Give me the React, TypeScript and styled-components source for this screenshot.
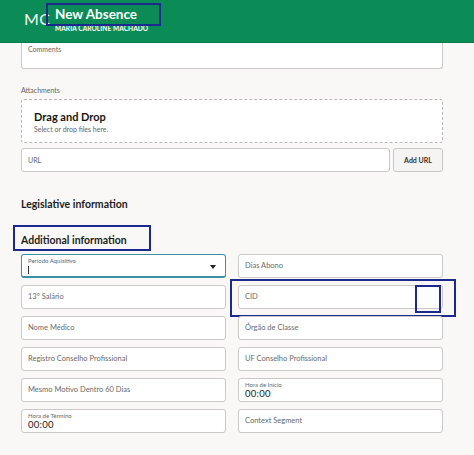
import React from "react";
import styled, { createGlobalStyle } from "styled-components";

const Global = createGlobalStyle`
  html, body { margin: 0; padding: 0; background: #f9f8f6; }
  body { font-family: Lato, "Noto Sans", Arial, sans-serif; color: #1d1d1d; }
  * { box-sizing: border-box; }
`;

const Page = styled.div`
  width: 474px;
  height: 455px;
  overflow: hidden;
  background: #f9f8f6;
`;

const Header = styled.header`
  height: 43px;
  background: #0b8c57;
  border-bottom: 1px solid #087a4b;
  display: flex;
  align-items: flex-start;
  padding-left: 24px;
  color: #fff;
`;

const Initials = styled.div`
  font-size: 16px;
  font-weight: 400;
  line-height: 20px;
  margin-top: 9px;
  letter-spacing: 0.5px;
  width: 31px;
  color: #f2f8f4;
`;

const TitleBlock = styled.div`
  display: flex;
  flex-direction: column;
  margin-top: 6px;
`;

const Annotated = styled.div<{ $l: number; $t: number; $r: number; $b: number }>`
  position: relative;
  &::after {
    content: "";
    position: absolute;
    left: ${(p) => p.$l}px;
    top: ${(p) => p.$t}px;
    right: ${(p) => p.$r}px;
    bottom: ${(p) => p.$b}px;
    border: 2px solid #1b2a8c;
    pointer-events: none;
  }
`;

const Title = styled.div`
  font-size: 13.5px;
  font-weight: 700;
  line-height: 17px;
  white-space: nowrap;
`;

const Subtitle = styled.div`
  font-size: 6.5px;
  font-weight: 700;
  line-height: 9px;
  margin-top: 1px;
  letter-spacing: 0.1px;
`;

const Content = styled.main`
  padding: 0 31px 0 21px;
  display: flex;
  flex-direction: column;
`;

const CommentsBox = styled.div`
  height: 26px;
  background: #fff;
  border: 1px solid #cbc9c5;
  border-top: none;
  border-radius: 0 0 3px 3px;
  padding: 1px 6px 0;
`;

const SmallLabel = styled.div`
  font-size: 7px;
  line-height: 10px;
  color: #666;
`;

const AttachLabel = styled(SmallLabel)`
  margin-top: 16px;
`;

const DropZone = styled.div`
  margin-top: 4px;
  height: 44px;
  background: #fff;
  border: 1px dashed #b9b7b3;
  border-radius: 3px;
  padding: 10px 12px 0;
  display: flex;
  flex-direction: column;
`;

const DropTitle = styled.div`
  font-size: 11px;
  font-weight: 700;
  line-height: 14px;
  color: #161513;
`;

const DropHint = styled.div`
  font-size: 7px;
  line-height: 10px;
  color: #666;
`;

const UrlRow = styled.div`
  margin-top: 5px;
  display: flex;
  gap: 3px;
  height: 24px;
`;

const UrlInput = styled.div`
  flex: 1;
  background: #fff;
  border: 1px solid #cbc9c5;
  border-radius: 3px;
  display: flex;
  align-items: center;
  padding-left: 6px;
  font-size: 7px;
  color: #666;
`;

const AddButton = styled.div`
  width: 50px;
  background: #f5f4f2;
  border: 1px solid #cbc9c5;
  border-radius: 3px;
  display: flex;
  align-items: center;
  justify-content: center;
  font-size: 7px;
  font-weight: 700;
  color: #333;
`;

const SectionTitle = styled.h2<{ $mt: number; $size: number }>`
  margin: ${(p) => p.$mt}px 0 0;
  font-size: ${(p) => p.$size}px;
  font-weight: 700;
  line-height: 14px;
  color: #1d1d1d;
  white-space: nowrap;
`;

const AddWrap = styled.div`
  margin-top: 22px;
  display: flex;
`;

const Grid = styled.div`
  margin-top: 7px;
  display: grid;
  grid-template-columns: 205px 205px;
  column-gap: 12px;
  row-gap: 7px;
  grid-auto-rows: 24px;
`;

const Field = styled.div<{ $focused?: boolean }>`
  position: relative;
  height: 100%;
  background: #fff;
  border: 1px solid ${(p) => (p.$focused ? "#3d8fa3" : "#cbc9c5")};
  border-bottom-width: ${(p) => (p.$focused ? 2 : 1)}px;
  border-radius: 3px;
  display: flex;
  flex-direction: column;
  justify-content: center;
  padding: 0 6px;
`;

const Placeholder = styled.div`
  font-size: 7.5px;
  line-height: 10px;
  color: #6a6a6a;
  white-space: nowrap;
`;

const TinyLabel = styled.div<{ $focused?: boolean }>`
  font-size: 6px;
  line-height: 7px;
  color: ${(p) => (p.$focused ? "#4d6a86" : "#666")};
  white-space: nowrap;
`;

const Value = styled.div`
  font-size: 9.5px;
  line-height: 11px;
  color: #222;
  letter-spacing: 0.3px;
`;

const Caret = styled.div`
  width: 1px;
  height: 8px;
  background: #333;
  margin-top: 2px;
`;

const Arrow = styled.div`
  position: absolute;
  right: 9px;
  top: 10px;
  width: 0;
  height: 0;
  border-left: 3px solid transparent;
  border-right: 3px solid transparent;
  border-top: 4px solid #222;
`;

const SmallSquare = styled.div`
  position: absolute;
  right: 1px;
  top: -1px;
  width: 26px;
  height: 28px;
  border: 2px solid #1b2a8c;
`;

type F = { label: string; value?: string };

const PlainField = ({ label, value }: F) => (
  <Field>
    {value ? (
      <>
        <TinyLabel>{label}</TinyLabel>
        <Value>{value}</Value>
      </>
    ) : (
      <Placeholder>{label}</Placeholder>
    )}
  </Field>
);

export default function App() {
  return (
    <Page>
      <Global />
      <Header>
        <Initials>MC</Initials>
        <TitleBlock>
          <Annotated $l={-9} $t={-3} $r={-13} $b={-3}>
            <Title>New Absence</Title>
          </Annotated>
          <Subtitle>MARIA CAROLINE MACHADO</Subtitle>
        </TitleBlock>
      </Header>
      <Content>
        <CommentsBox>
          <SmallLabel>Comments</SmallLabel>
        </CommentsBox>
        <AttachLabel>Attachments</AttachLabel>
        <DropZone>
          <DropTitle>Drag and Drop</DropTitle>
          <DropHint>Select or drop files here.</DropHint>
        </DropZone>
        <UrlRow>
          <UrlInput>URL</UrlInput>
          <AddButton>Add URL</AddButton>
        </UrlRow>
        <SectionTitle $mt={25} $size={10.5}>Legislative information</SectionTitle>
        <AddWrap>
          <Annotated $l={-8} $t={-8} $r={-24} $b={-4}>
            <SectionTitle $mt={0} $size={10.5}>Additional information</SectionTitle>
          </Annotated>
        </AddWrap>
        <Grid>
          <Field $focused>
            <TinyLabel $focused>Período Aquisitivo</TinyLabel>
            <Caret />
            <Arrow />
          </Field>
          <PlainField label="Dias Abono" />
          <PlainField label="13º Salário" />
          <Annotated $l={-8} $t={-6} $r={-13} $b={-8}>
            <Field>
              <Placeholder>CID</Placeholder>
              <SmallSquare />
            </Field>
          </Annotated>
          <PlainField label="Nome Médico" />
          <PlainField label="Órgão de Classe" />
          <PlainField label="Registro Conselho Profissional" />
          <PlainField label="UF Conselho Profissional" />
          <PlainField label="Mesmo Motivo Dentro 60 Dias" />
          <PlainField label="Hora de Início" value="00:00" />
          <PlainField label="Hora de Término" value="00:00" />
          <PlainField label="Context Segment" />
        </Grid>
      </Content>
    </Page>
  );
}
